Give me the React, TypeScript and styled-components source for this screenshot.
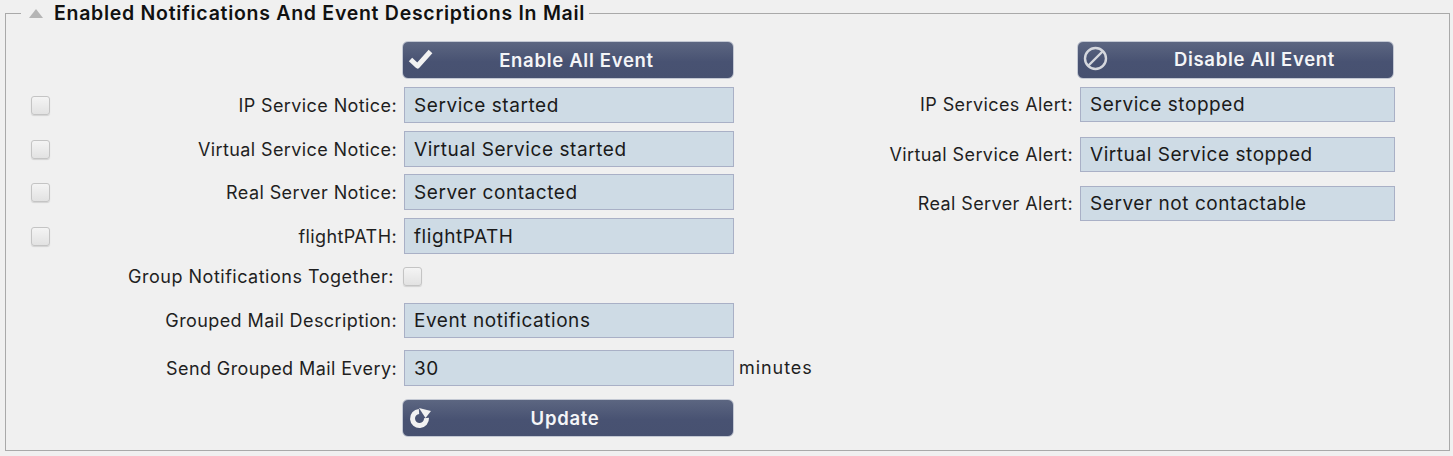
import React from "react";
import styled, { createGlobalStyle } from "styled-components";

const GlobalStyle = createGlobalStyle`
  html, body {
    margin: 0;
    padding: 0;
    background: #f0f0f0;
    font-family: "Inter", "Open Sans", sans-serif;
    color: #1f1f1f;
  }
`;

const Panel = styled.fieldset`
  box-sizing: border-box;
  width: 1445px;
  height: 450px;
  margin: 1px 0 0 5px;
  padding: 0 54px 0 25px;
  border: 1px solid #a9a9a9;
  display: flex;
  justify-content: space-between;
`;

const Legend = styled.legend`
  margin-left: -10px;
  padding: 0 4px 0 0;
  height: 24px;
  display: flex;
  align-items: center;
  font-size: 19.5px;
  font-weight: 600;
  letter-spacing: 0.72px;
  color: #111;
  white-space: nowrap;
`;

const Arrow = styled.span`
  width: 0;
  height: 0;
  margin: 0 11px 0 8px;
  border-left: 7.5px solid transparent;
  border-right: 7.5px solid transparent;
  border-bottom: 9px solid #b5b5b5;
`;

const LeftColumn = styled.div`
  width: 703px;
  padding-top: 16px;
`;

const RightColumn = styled.div`
  width: 520px;
  padding-top: 16px;
`;

const Row = styled.div<{ $top: number }>`
  display: grid;
  grid-template-columns: 18px 355px 330px;
  align-items: center;
  margin-top: ${({ $top }) => $top}px;
`;

const RightRow = styled.div<{ $top: number }>`
  display: grid;
  grid-template-columns: 1fr 315px;
  column-gap: 7px;
  align-items: center;
  margin-top: ${({ $top }) => $top}px;
`;

const Label = styled.label`
  grid-column: 2;
  padding-right: 7px;
  text-align: right;
  font-size: 18px;
  letter-spacing: 0.4px;
  white-space: nowrap;
`;

const RightLabel = styled(Label)`
  grid-column: 1;
  padding-right: 0;
`;

const GroupRow = styled.div`
  display: flex;
  align-items: center;
  justify-content: flex-end;
  gap: 9px;
  width: 391px;
  margin-top: 12px;
  font-size: 18px;
  letter-spacing: 0.5px;
`;

const Check = styled.span`
  display: block;
  box-sizing: border-box;
  width: 19px;
  height: 19px;
  border: 1px solid #c4c4c4;
  border-radius: 3px;
  background: linear-gradient(#f4f4f4, #e2e2e2);
  box-shadow: 0 1px 1px rgba(0, 0, 0, 0.12);
`;

const TextBox = styled.div<{ $height?: number }>`
  box-sizing: border-box;
  display: flex;
  align-items: center;
  height: ${({ $height }) => $height ?? 36}px;
  padding-left: 9px;
  background: #cedbe5;
  border: 1px solid #a9b0c6;
  font-size: 19px;
  letter-spacing: 0.56px;
  color: #1a1a1a;
  white-space: nowrap;
`;

const Suffix = styled.div`
  position: relative;
`;

const Minutes = styled.span`
  position: absolute;
  left: calc(100% + 5px);
  top: 7px;
  font-size: 18px;
  letter-spacing: 0.95px;
`;

const ActionButton = styled.button<{
  $width: number;
  $left: number;
  $top?: number;
  $textLeft?: number;
  $textRight?: number;
  $textRaise?: number;
}>`
  position: relative;
  display: block;
  box-sizing: border-box;
  width: ${({ $width }) => $width}px;
  height: 38px;
  margin: ${({ $top }) => $top ?? 0}px 0 0 ${({ $left }) => $left}px;
  padding: 0 ${({ $textRight }) => $textRight ?? 0}px ${({ $textRaise }) => $textRaise ?? 0}px
    ${({ $textLeft }) => $textLeft ?? 0}px;
  border: 1px solid #c3c8d3;
  border-radius: 6px;
  background: linear-gradient(#5c6681, #485272 55%, #475170);
  color: #f4f5f7;
  font-family: inherit;
  font-size: 18.5px;
  font-weight: 600;
  letter-spacing: 0.7px;
`;

const ButtonIcon = styled.svg`
  position: absolute;
  left: 5px;
  top: 4px;
  width: 26px;
  height: 26px;
`;

const CheckIcon = () => (
  <ButtonIcon viewBox="0 0 26 26">
    <path d="M2.5 13.5 L9.5 20 L22.5 5.5" fill="none" stroke="#f2f2f2" strokeWidth="5" strokeLinejoin="round" />
  </ButtonIcon>
);

const BanIcon = () => (
  <ButtonIcon viewBox="0 0 26 26">
    <circle cx="12.5" cy="12.5" r="10.5" fill="none" stroke="#d5d7dd" strokeWidth="2.4" />
    <path d="M5.5 19.5 L19.5 5.5" stroke="#d5d7dd" strokeWidth="2.4" />
  </ButtonIcon>
);

const UpdateIcon = () => (
  <ButtonIcon viewBox="0 0 26 26">
    <path d="M11 7.5 A7 7 0 1 0 18.5 14" fill="none" stroke="#f2f2f2" strokeWidth="5" />
    <path d="M11 4 L23 7 L17.5 14 Z" fill="#f2f2f2" />
  </ButtonIcon>
);

const App = () => {
  return (
    <>
      <GlobalStyle />
      <Panel>
        <Legend>
          <Arrow />
          Enabled Notifications And Event Descriptions In Mail
        </Legend>
        <LeftColumn>
          <ActionButton $width={332} $left={371} $textLeft={17}>
            <CheckIcon />
            Enable All Event
          </ActionButton>
          <Row $top={8}>
            <Check />
            <Label>IP Service Notice:</Label>
            <TextBox>Service started</TextBox>
          </Row>
          <Row $top={8}>
            <Check />
            <Label>Virtual Service Notice:</Label>
            <TextBox>Virtual Service started</TextBox>
          </Row>
          <Row $top={7}>
            <Check />
            <Label>Real Server Notice:</Label>
            <TextBox>Server contacted</TextBox>
          </Row>
          <Row $top={8}>
            <Check />
            <Label>flightPATH:</Label>
            <TextBox>flightPATH</TextBox>
          </Row>
          <GroupRow>
            Group Notifications Together:
            <Check />
          </GroupRow>
          <Row $top={16}>
            <Label>Grouped Mail Description:</Label>
            <TextBox $height={35}>Event notifications</TextBox>
          </Row>
          <Row $top={12}>
            <Label>Send Grouped Mail Every:</Label>
            <Suffix>
              <TextBox>30</TextBox>
              <Minutes>minutes</Minutes>
            </Suffix>
          </Row>
          <ActionButton $width={332} $left={371} $top={13} $textRight={6}>
            <UpdateIcon />
            Update
          </ActionButton>
        </LeftColumn>
        <RightColumn>
          <ActionButton $width={317} $left={202} $textLeft={38} $textRaise={3}>
            <BanIcon />
            Disable All Event
          </ActionButton>
          <RightRow $top={8}>
            <RightLabel>IP Services Alert:</RightLabel>
            <TextBox $height={35}>Service stopped</TextBox>
          </RightRow>
          <RightRow $top={15}>
            <RightLabel>Virtual Service Alert:</RightLabel>
            <TextBox $height={35}>Virtual Service stopped</TextBox>
          </RightRow>
          <RightRow $top={14}>
            <RightLabel>Real Server Alert:</RightLabel>
            <TextBox $height={35}>Server not contactable</TextBox>
          </RightRow>
        </RightColumn>
      </Panel>
    </>
  );
};

export default App;
